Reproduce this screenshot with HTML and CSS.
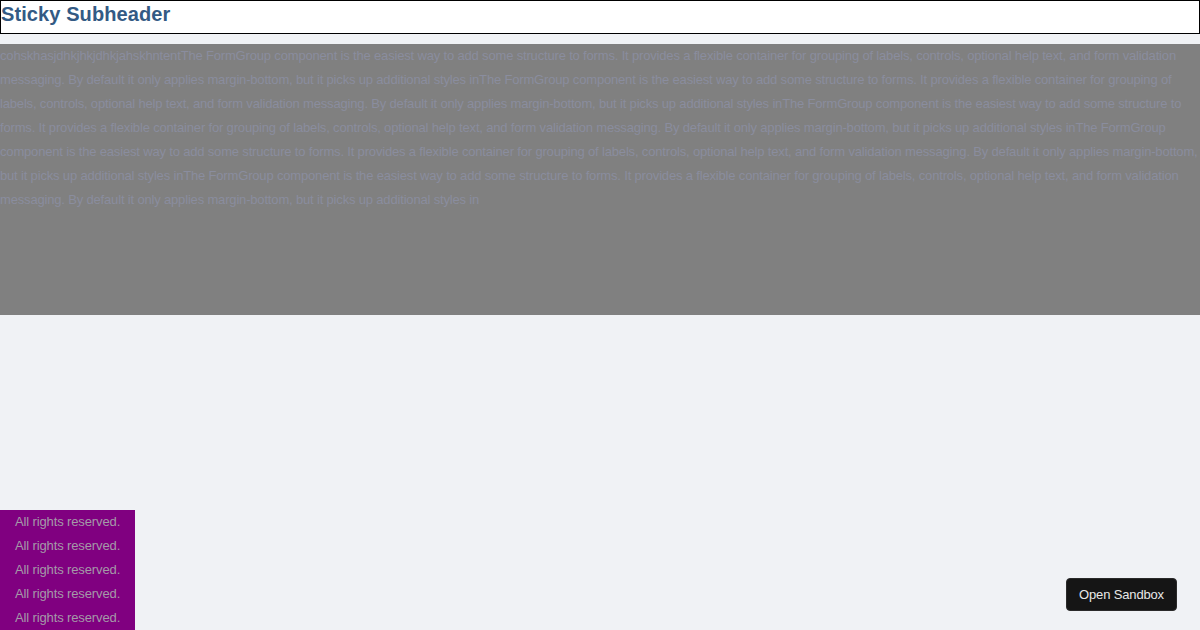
FILE: index.html
```html
<!DOCTYPE html>
<html>
<head>
<meta charset="utf-8">
<link rel="stylesheet" href="styles.css">
</head>
<body>
<div class="page">
  <header class="subheader"><h1 class="subheader-title">Sticky Subheader</h1></header>
  <main class="content">cohskhasjdhkjhkjdhkjahskhntentThe FormGroup component is the easiest way to add some structure to forms. It provides a flexible container for grouping of labels, controls, optional help text, and form validation messaging. By default it only applies margin-bottom, but it picks up additional styles inThe FormGroup component is the easiest way to add some structure to forms. It provides a flexible container for grouping of labels, controls, optional help text, and form validation messaging. By default it only applies margin-bottom, but it picks up additional styles inThe FormGroup component is the easiest way to add some structure to forms. It provides a flexible container for grouping of labels, controls, optional help text, and form validation messaging. By default it only applies margin-bottom, but it picks up additional styles inThe FormGroup component is the easiest way to add some structure to forms. It provides a flexible container for grouping of labels, controls, optional help text, and form validation messaging. By default it only applies margin-bottom, but it picks up additional styles inThe FormGroup component is the easiest way to add some structure to forms. It provides a flexible container for grouping of labels, controls, optional help text, and form validation messaging. By default it only applies margin-bottom, but it picks up additional styles in</main>
  <footer class="footer">
    <div class="footer-row">All rights reserved.</div>
    <div class="footer-row">All rights reserved.</div>
    <div class="footer-row">All rights reserved.</div>
    <div class="footer-row">All rights reserved.</div>
    <div class="footer-row">All rights reserved.</div>
  </footer>
</div>
<a class="sandbox-btn">Open Sandbox</a>
</body>
</html>
```

FILE: styles.css
```css
html, body {
  margin: 0;
  padding: 0;
}
body {
  background: #f0f2f5;
  font-family: "Liberation Sans", Arial, sans-serif;
}
.page {
  min-height: 630px;
  display: flex;
  flex-direction: column;
}
.subheader {
  height: 32px;
  border: 1px solid #000;
  background: #fff;
}
.subheader-title {
  margin: 0;
  padding: 1px 0 0 0;
  font-size: 20px;
  line-height: 24px;
  font-weight: bold;
  letter-spacing: 0.1px;
  color: #335a84;
}
.content {
  margin-top: 10px;
  height: 271px;
  background: #808080;
  color: #8a8d9e;
  font-size: 13px;
  letter-spacing: -0.17px;
  line-height: 24px;
}
.footer {
  margin-top: auto;
  align-self: flex-start;
  width: 135px;
  background: #800080;
}
.footer-row {
  height: 24px;
  line-height: 24px;
  font-size: 13px;
  letter-spacing: -0.12px;
  color: #a49aa8;
  text-align: center;
}
.sandbox-btn {
  position: fixed;
  right: 23px;
  bottom: 19px;
  width: 111px;
  height: 33px;
  box-sizing: border-box;
  background: #151515;
  color: #e8e8e8;
  border: 1px solid #2a2a2a;
  border-radius: 4px;
  font-size: 13px;
  letter-spacing: -0.15px;
  line-height: 31px;
  text-align: center;
}
```
